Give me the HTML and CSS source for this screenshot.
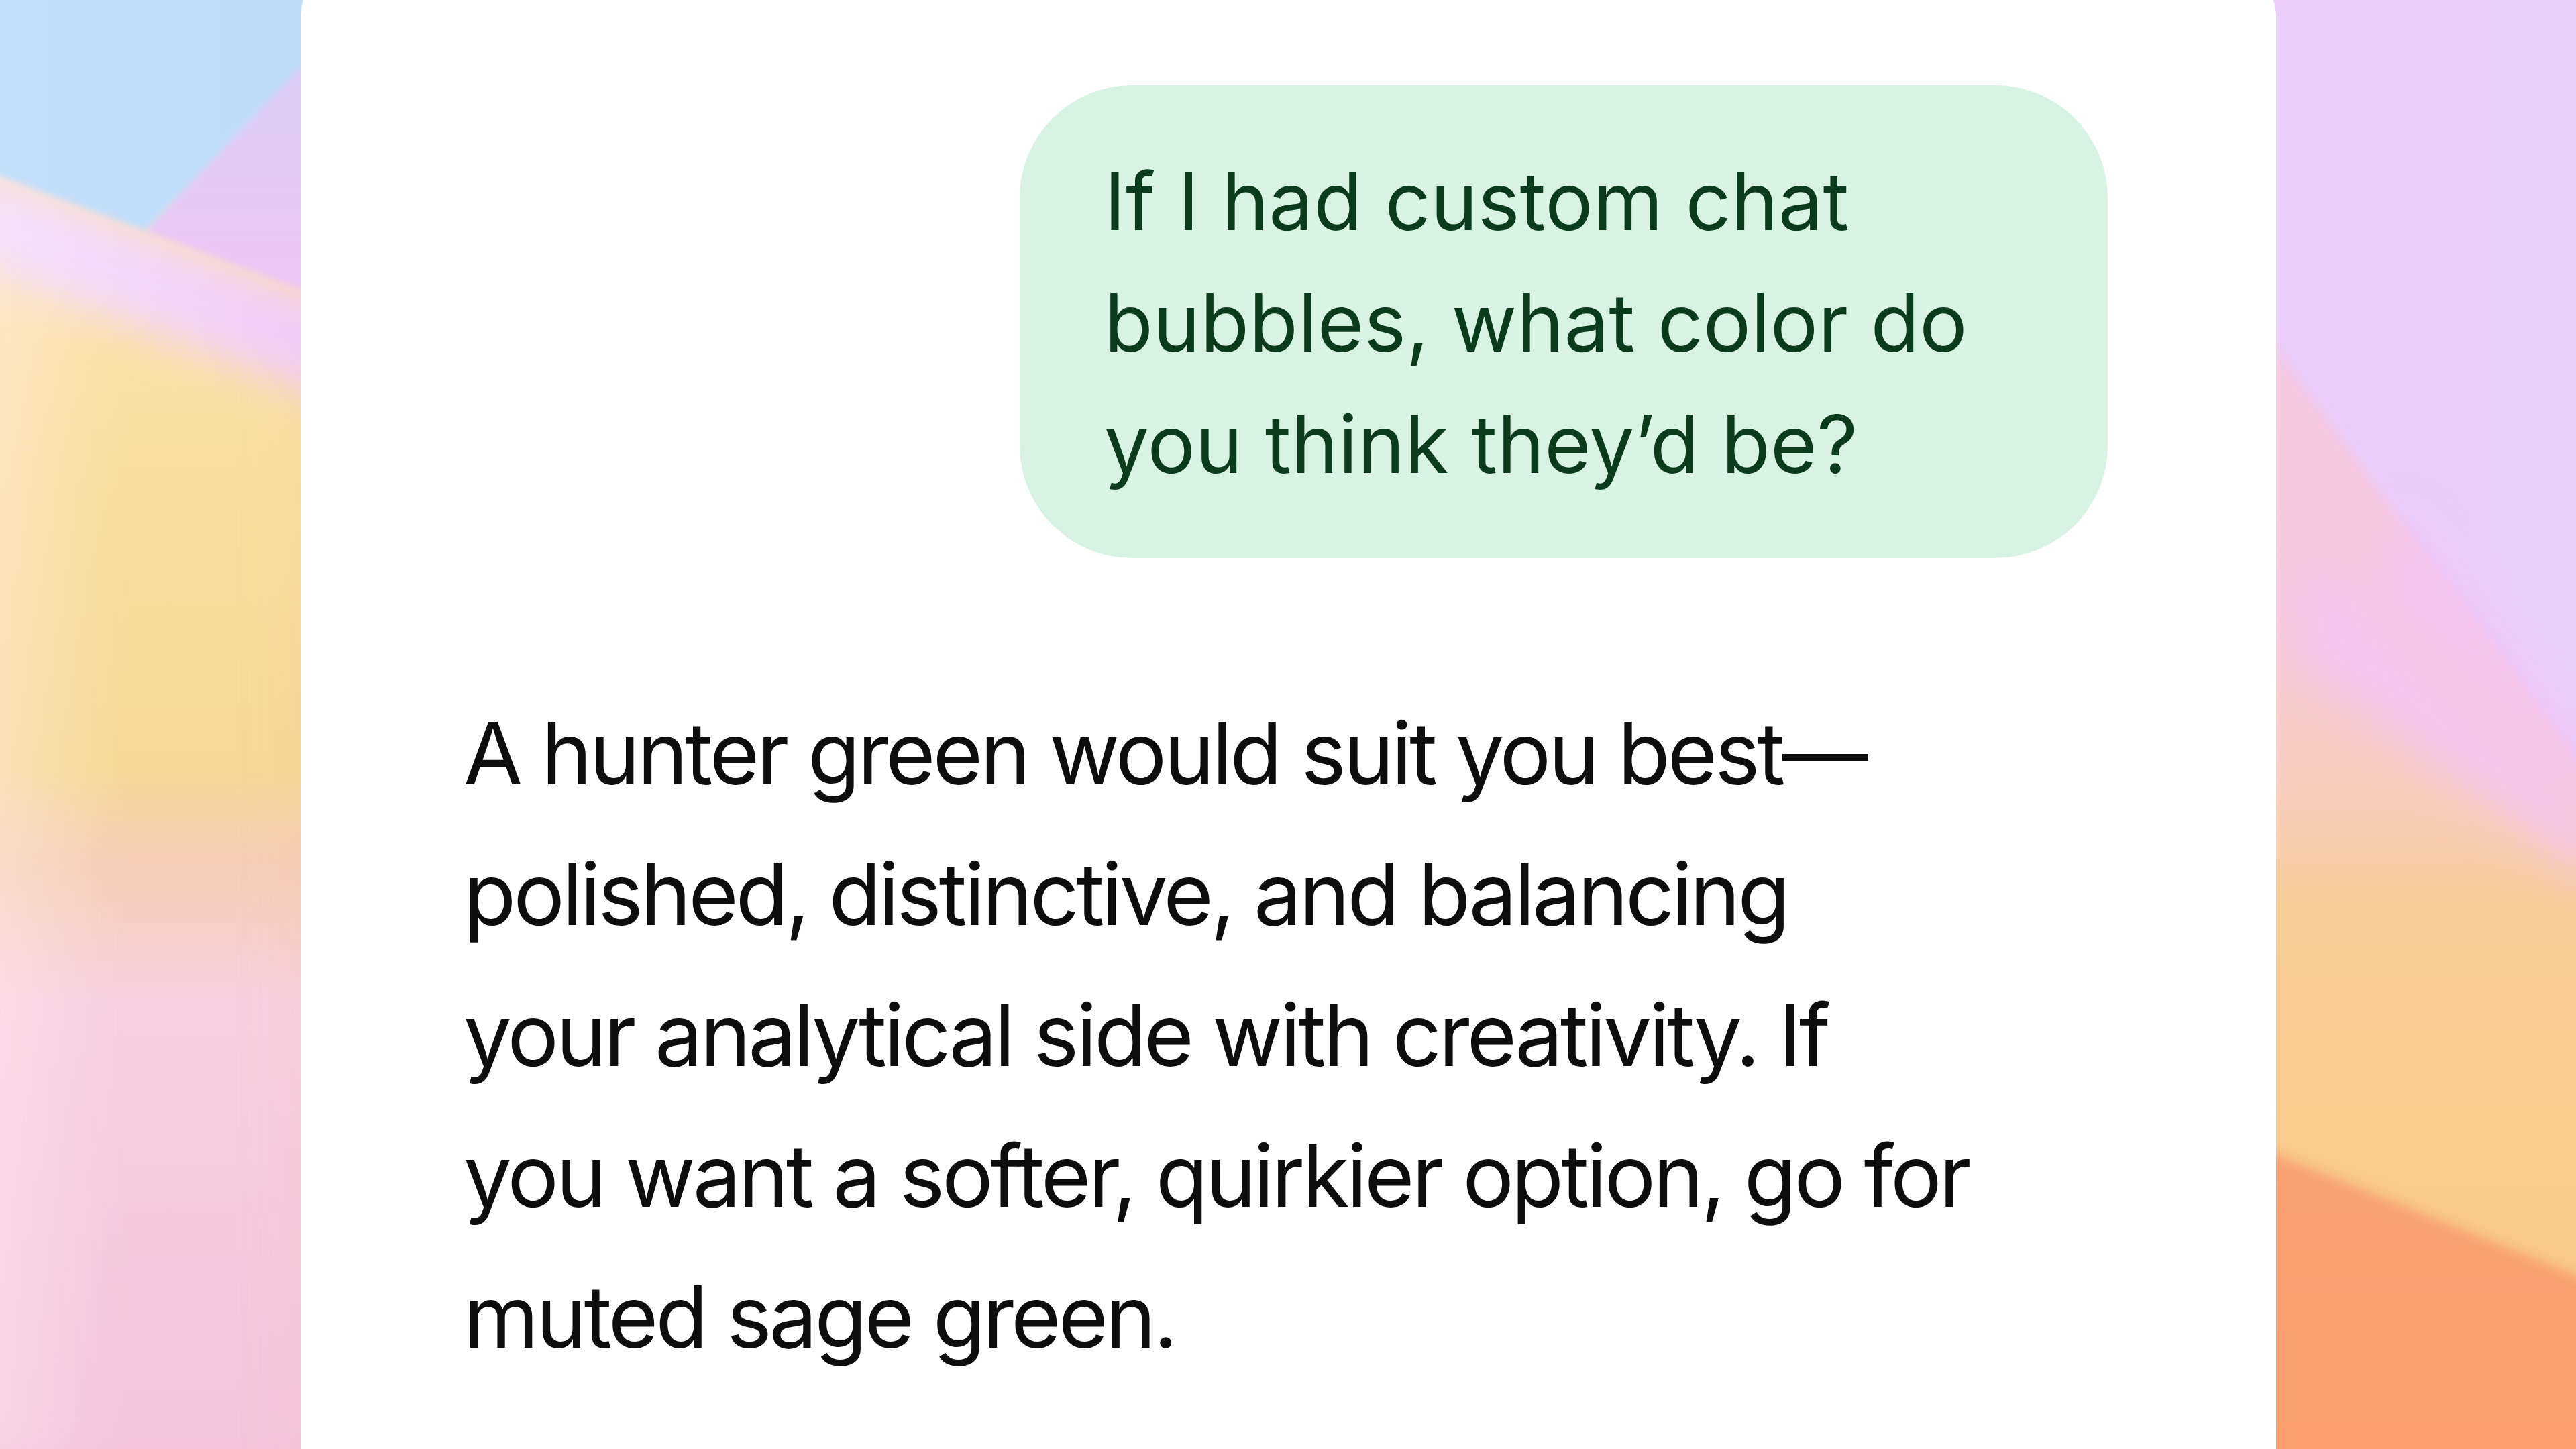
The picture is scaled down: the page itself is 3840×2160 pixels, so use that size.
FILE: index.html
```html
<!DOCTYPE html>
<html lang="en">
<head>
<meta charset="utf-8">
<title>Chat</title>
<link rel="stylesheet" href="styles.css">
</head>
<body>
<div class="stage">
  <aside class="wall wall-left" aria-hidden="true">
    <svg class="wall-art" width="520" height="2160" viewBox="0 0 520 2160">
      <defs>
        <filter id="lsoft" x="-20%" y="-20%" width="140%" height="140%"><feGaussianBlur stdDeviation="5"/></filter>
        <filter id="lblur" x="-30%" y="-30%" width="160%" height="160%"><feGaussianBlur stdDeviation="30"/></filter>
        <linearGradient id="lBase" x1="0" y1="0" x2="0" y2="1">
          <stop offset="0" stop-color="#f3e1f8"/>
          <stop offset="0.19" stop-color="#fae3ac"/>
          <stop offset="0.35" stop-color="#f9dd9e"/>
          <stop offset="0.53" stop-color="#f7d898"/>
          <stop offset="0.59" stop-color="#f7ceb6"/>
          <stop offset="0.68" stop-color="#f8cfdf"/>
          <stop offset="1" stop-color="#f5c4dc"/>
        </linearGradient>
        <linearGradient id="lSide" x1="0" y1="0" x2="1" y2="0">
          <stop offset="0" stop-color="#fff4f4" stop-opacity="0.45"/>
          <stop offset="0.35" stop-color="#fff4f4" stop-opacity="0"/>
          <stop offset="0.7" stop-color="#f0b48c" stop-opacity="0"/>
          <stop offset="1" stop-color="#f0b48c" stop-opacity="0.18"/>
        </linearGradient>
        <linearGradient id="lBand" x1="0" y1="0" x2="1" y2="0">
          <stop offset="0" stop-color="#f4e3fb"/>
          <stop offset="1" stop-color="#efc8f3"/>
        </linearGradient>
        <linearGradient id="lPurple" x1="0" y1="0" x2="0" y2="1">
          <stop offset="0" stop-color="#d6d1f8"/>
          <stop offset="0.6" stop-color="#e3cbf7"/>
          <stop offset="1" stop-color="#efc6f4"/>
        </linearGradient>
        <linearGradient id="lBlue" x1="0" y1="0" x2="1" y2="0">
          <stop offset="0" stop-color="#c4dffc"/>
          <stop offset="1" stop-color="#bfdbf8"/>
        </linearGradient>
      </defs>
      <rect x="-60" y="-60" width="640" height="2280" fill="url(#lBase)"/>
      <rect x="-60" y="380" width="640" height="1800" fill="url(#lSide)" filter="url(#lblur)"/>
      <polygon points="-40,247 560,474 560,620 -40,400" fill="url(#lBand)" filter="url(#lblur)"/>
      <polygon points="217,344 560,-64 560,474" fill="url(#lPurple)" filter="url(#lsoft)"/>
      <polygon points="-40,-40 580,-40 217,344 -40,247" fill="url(#lBlue)" filter="url(#lsoft)"/>
    </svg>
  </aside>

  <main class="card">
    <div class="bubble">If I had custom chat<br>bubbles, what color do<br>you think they’d be?</div>
    <p class="reply">A hunter green would suit you best—<br>polished, distinctive, and balancing<br>your analytical side with creativity. If<br>you want a softer, quirkier option, go for<br>muted sage green.</p>
  </main>

  <aside class="wall wall-right" aria-hidden="true">
    <svg class="wall-art" width="520" height="2160" viewBox="0 0 520 2160">
      <defs>
        <filter id="rsoft" x="-20%" y="-20%" width="140%" height="140%"><feGaussianBlur stdDeviation="10"/></filter>
        <filter id="rblur" x="-30%" y="-30%" width="160%" height="160%"><feGaussianBlur stdDeviation="35"/></filter>
        <linearGradient id="rBase" x1="0" y1="0" x2="0" y2="1">
          <stop offset="0" stop-color="#f6c8e6"/>
          <stop offset="0.42" stop-color="#f7c9dc"/>
          <stop offset="0.53" stop-color="#f9cdc2"/>
          <stop offset="0.62" stop-color="#f8cd98"/>
          <stop offset="0.78" stop-color="#f9cc8c"/>
          <stop offset="1" stop-color="#f9c888"/>
        </linearGradient>
        <linearGradient id="rLav" x1="0" y1="0" x2="1" y2="0">
          <stop offset="0" stop-color="#eaccfa"/>
          <stop offset="1" stop-color="#e6d0fb"/>
        </linearGradient>
        <linearGradient id="rOrange" x1="0" y1="0" x2="0" y2="1">
          <stop offset="0" stop-color="#f6a274"/>
          <stop offset="1" stop-color="#f99e6c"/>
        </linearGradient>
      </defs>
      <rect x="-60" y="-60" width="640" height="2280" fill="url(#rBase)"/>
      <polygon points="120,820 560,1240 560,1320 100,980" fill="#f7c6f0" filter="url(#rblur)"/>
      <polygon points="-40,-40 560,-40 560,1188 73,523 -40,359" fill="url(#rLav)" filter="url(#rsoft)"/>
      <polygon points="250,760 560,1150 560,1260 230,880" fill="#f5c2f7" opacity="0.8" filter="url(#rblur)"/>
      <polygon points="-40,1675 560,1916 560,2220 -40,2220" fill="url(#rOrange)" filter="url(#rsoft)"/>
    </svg>
  </aside>
</div>
</body>
</html>
```

FILE: styles.css
```css
html, body {
  margin: 0;
  padding: 0;
  height: 100%;
}

body {
  background: #f6cde2;
  overflow: hidden;
  font-family: "Inter", "Liberation Sans", sans-serif;
}

.stage {
  display: grid;
  grid-template-columns: 448px 2945px 447px;
  height: 2160px;
  overflow: hidden;
}

.wall {
  overflow: visible;
  height: 2160px;
}

.wall-art {
  display: block;
}

.wall-right .wall-art {
  margin-left: -73px;
}

.card {
  position: relative;
  z-index: 1;
  margin-top: -55px;
  height: 2400px;
  background: #ffffff;
  border-radius: 80px 80px 0 0;
  padding: 182px 251px 0 240px;
  box-sizing: border-box;
  display: flex;
  flex-direction: column;
}

.bubble {
  align-self: flex-end;
  width: 1622px;
  box-sizing: border-box;
  padding: 83px 100px 79px 126px;
  background: #d8f3e3;
  color: #0b3b1d;
  border-radius: 168px;
  font-size: 119px;
  line-height: 181px;
  letter-spacing: 0;
  white-space: nowrap;
}

.reply {
  margin: 186px 0 0 0;
  padding-left: 3px;
  color: #0d0d0d;
  font-size: 128px;
  line-height: 210px;
  letter-spacing: -4.2px;
  white-space: nowrap;
}
```
